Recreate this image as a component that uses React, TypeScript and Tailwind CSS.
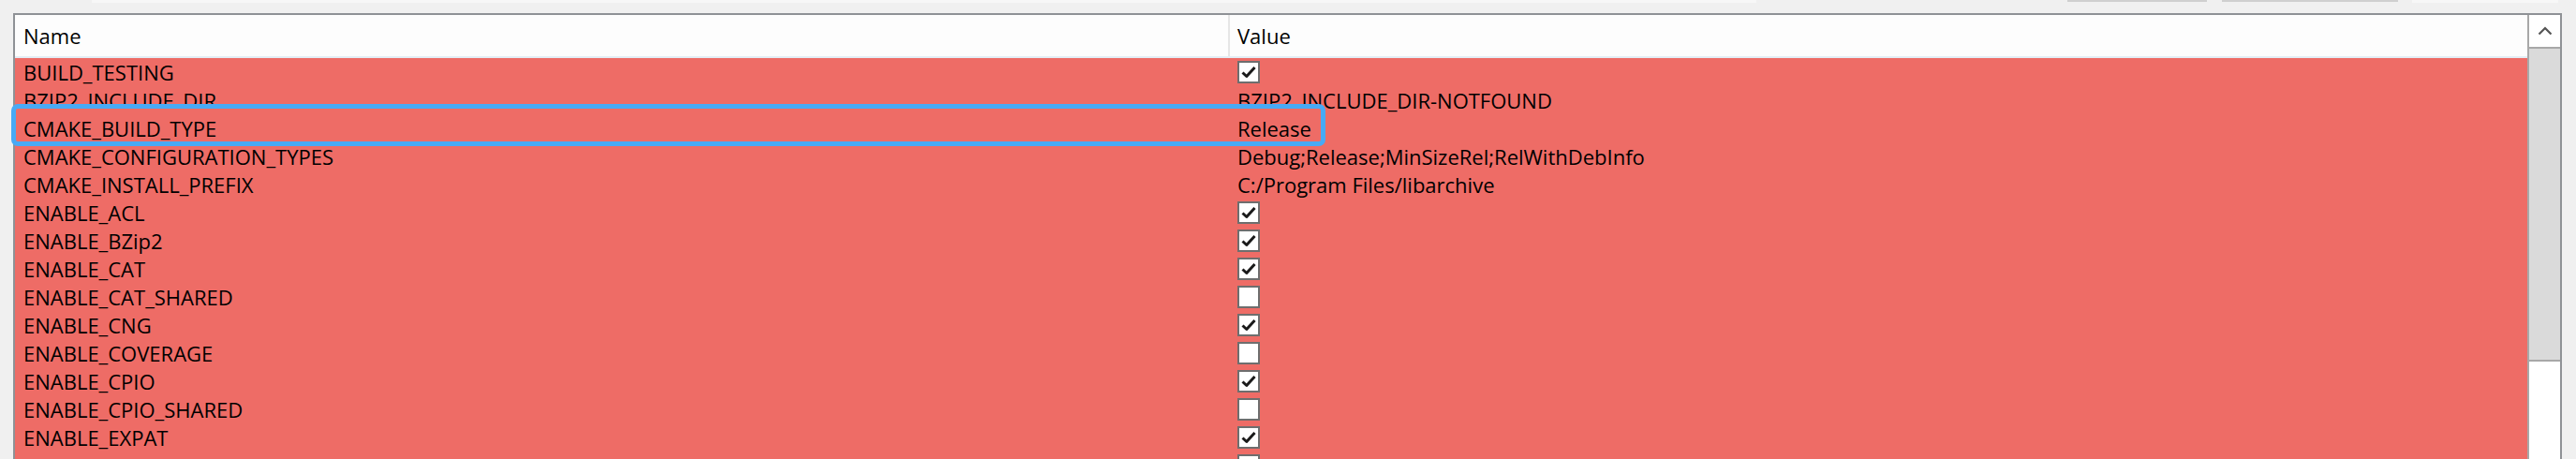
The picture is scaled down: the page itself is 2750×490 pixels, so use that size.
import React from "react";

type Row = { name: string; value?: string; check?: boolean };

const rows: Row[] = [
  { name: "BUILD_TESTING", check: true },
  { name: "BZIP2_INCLUDE_DIR", value: "BZIP2_INCLUDE_DIR-NOTFOUND" },
  { name: "CMAKE_BUILD_TYPE", value: "Release" },
  { name: "CMAKE_CONFIGURATION_TYPES", value: "Debug;Release;MinSizeRel;RelWithDebInfo" },
  { name: "CMAKE_INSTALL_PREFIX", value: "C:/Program Files/libarchive" },
  { name: "ENABLE_ACL", check: true },
  { name: "ENABLE_BZip2", check: true },
  { name: "ENABLE_CAT", check: true },
  { name: "ENABLE_CAT_SHARED", check: false },
  { name: "ENABLE_CNG", check: true },
  { name: "ENABLE_COVERAGE", check: false },
  { name: "ENABLE_CPIO", check: true },
  { name: "ENABLE_CPIO_SHARED", check: false },
  { name: "ENABLE_EXPAT", check: true },
  { name: "ENABLE_ICONV", check: true },
];

const SELECTED = "CMAKE_BUILD_TYPE";

function CheckBox({ on }: { on: boolean }) {
  return (
    <div className="w-[24px] h-[24px] border-2 border-[#6e6e6e] bg-white flex items-center justify-center">
      {on && (
        <svg width="16" height="14" viewBox="0 0 16 14">
          <path d="M1.5 7.5 L5.8 11.5 L14.5 2" fill="none" stroke="#1a1a1a" strokeWidth="3" strokeLinejoin="round" />
        </svg>
      )}
    </div>
  );
}

function CacheRow({ row }: { row: Row }) {
  const sel = row.name === SELECTED;
  return (
    <div className={`relative flex h-[30px] shrink-0 bg-[#ee6c66] text-black ${sel ? "z-10" : ""}`}>
      {sel && (
        <div className="absolute left-[-4px] top-[-11px] w-[1403px] h-[45px] rounded-[7px] border-[5px] border-[#48aaf5] bg-[#ee6c66]" />
      )}
      <div className="relative w-[1297px] pl-[9px] flex items-center">{row.name}</div>
      <div className="relative flex-1 pl-[8px] flex items-center">
        {row.check === undefined ? row.value : <CheckBox on={row.check} />}
      </div>
    </div>
  );
}

export default function App() {
  return (
    <div
      className="w-[2750px] h-[490px] bg-[#f0f0f0] overflow-hidden text-[22px] leading-none"
      style={{ fontFamily: '"Segoe UI", "Open Sans", "Noto Sans", sans-serif' }}
    >
      {/* bottoms of the controls above the list */}
      <div className="h-[14px] flex items-start">
        <div className="ml-[98px] w-[1777px] h-[3px] bg-[#f7f7f7]" />
        <div className="ml-[332px] w-[149px] h-[2px] bg-[#cfcfcf]" />
        <div className="ml-[16px] w-[188px] h-[2px] bg-[#cfcfcf]" />
        <div className="ml-[15px] w-[156px] h-[3px] bg-[#f7f7f7]" />
      </div>

      <div className="ml-[14px] w-[2721px] h-[476px] border-2 border-b-0 border-[#8f9296] flex">
        <div className="flex-1 flex flex-col">
          <div className="h-[46px] shrink-0 flex bg-[#fdfdfd] border-b-2 border-[#e4edf4]">
            <div className="w-[1297px] pl-[9px] flex items-center border-r-2 border-[#e6e6e6]">Name</div>
            <div className="flex-1 pl-[8px] flex items-center">Value</div>
          </div>
          {rows.map((r) => (
            <CacheRow key={r.name} row={r} />
          ))}
        </div>

        <div className="w-[35px] flex flex-col border-l-2 border-[#a8a8a8] bg-white">
          <div className="h-[34px] flex items-center justify-center bg-white">
            <svg width="16" height="10" viewBox="0 0 16 10">
              <path d="M1.5 8.5 L8 2 L14.5 8.5" fill="none" stroke="#555" strokeWidth="2.2" />
            </svg>
          </div>
          <div className="h-[336px] bg-[#dadada] border-y-2 border-[#a8a8a8]" />
          <div className="flex-1 bg-white" />
        </div>
      </div>
    </div>
  );
}
